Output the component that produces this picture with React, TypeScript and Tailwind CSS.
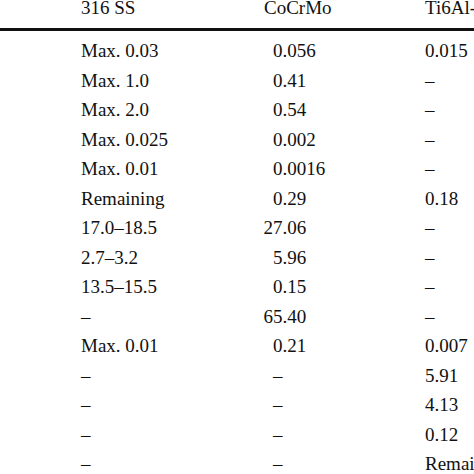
const ROWS: [string, string, string][] = [
  ['Max. 0.03', '0.056', '0.015'],
  ['Max. 1.0', '0.41', '–'],
  ['Max. 2.0', '0.54', '–'],
  ['Max. 0.025', '0.002', '–'],
  ['Max. 0.01', '0.0016', '–'],
  ['Remaining', '0.29', '0.18'],
  ['17.0–18.5', '27.06', '–'],
  ['2.7–3.2', '5.96', '–'],
  ['13.5–15.5', '0.15', '–'],
  ['–', '65.40', '–'],
  ['Max. 0.01', '0.21', '0.007'],
  ['–', '–', '5.91'],
  ['–', '–', '4.13'],
  ['–', '–', '0.12'],
  ['–', '–', 'Remaining'],
];

// split at the decimal point so column 2 lines up on it
function splitNum(v: string) {
  const i = v.indexOf('.');
  if (i < 0) return [v, ''];
  return [v.slice(0, i), v.slice(i)];
}

export default function App() {
  return (
    <div
      className="w-[474px] h-[474px] overflow-hidden bg-white text-[#111] text-[19px]"
      style={{ fontFamily: '"Liberation Serif", "Times New Roman", serif' }}
    >
      {/* header */}
      <div className="h-[31px] border-b-[3px] border-[#111] grid grid-cols-[81px_171.5px_172.5px_300px] leading-[15px] whitespace-nowrap">
        <div />
        <div>316 SS</div>
        <div className="pl-[11.5px]">CoCrMo</div>
        <div>Ti6Al-4V</div>
      </div>

      <div className="pt-[5px]">
        {ROWS.map((r, idx) => {
          const [int, frac] = splitNum(r[1]);
          return (
            <div
              key={idx}
              className="grid grid-cols-[81px_171.5px_30px_142.5px_300px] leading-[29.5px] whitespace-nowrap"
            >
              <div />
              <div>{r[0]}</div>
              <div className="text-right">{int}</div>
              <div>{frac}</div>
              <div>{r[2]}</div>
            </div>
          );
        })}
      </div>
    </div>
  );
}
